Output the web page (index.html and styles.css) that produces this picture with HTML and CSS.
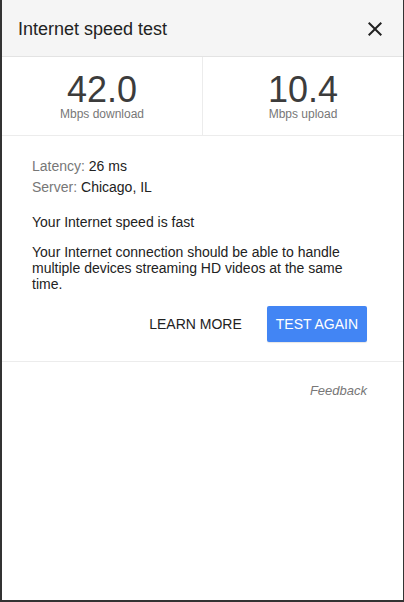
FILE: index.html
```html
<!DOCTYPE html>
<html lang="en">
<head>
	<meta charset="UTF-8">
	<title>Internet speed test</title>
	<link rel="stylesheet" href="styles.css">
</head>
<body>
	<div class="dialog">
		<div class="head">
			<h1 class="title">Internet speed test</h1>
			<a class="close" href="#close">
				<svg width="24" height="24" viewBox="0 0 24 24"><path d="M19 6.41L17.59 5 12 10.59 6.41 5 5 6.41 10.59 12 5 17.59 6.41 19 12 13.41 17.59 19 19 17.59 13.41 12z" fill="#222"/></svg>
			</a>
		</div>
		<div class="stats">
			<div class="stat">
				<div class="num">42.0</div>
				<div class="unit">Mbps download</div>
			</div>
			<div class="stat">
				<div class="num">10.4</div>
				<div class="unit">Mbps upload</div>
			</div>
		</div>
		<div class="info">
			<div class="line"><span class="label">Latency:</span> 26 ms</div>
			<div class="line"><span class="label">Server:</span> Chicago, IL</div>
			<div class="verdict">Your Internet speed is fast</div>
			<p class="desc">Your Internet connection should be able to handle multiple devices streaming HD videos at the same time.</p>
			<div class="actions">
				<a class="btn" href="#more">LEARN MORE</a>
				<a class="btn primary" href="#again">TEST AGAIN</a>
			</div>
		</div>
		<div class="foot">
			<a class="feedback" href="#feedback">Feedback</a>
		</div>
	</div>
</body>
</html>
```
FILE: styles.css
```css
*{
	margin: 0;
	padding: 0;
	box-sizing: border-box;
	text-decoration: none;
}
body{
	font-family: "Liberation Sans", Arial, sans-serif;
	color: #222;
	background: #fff;
}
.dialog{
	width: 404px;
	height: 602px;
	border-left: 2px solid #333;
	border-right: 1px solid #333;
	border-bottom: 2px solid #333;
	background: #fff;
}
.head{
	height: 57px;
	display: flex;
	align-items: center;
	justify-content: space-between;
	padding: 0 16px 0 16px;
	background: #f5f5f5;
	border-bottom: 1px solid #e3e3e3;
}
.title{
	font-size: 18px;
	font-weight: normal;
	line-height: 20px;
	color: #222;
	padding-top: 2px;
}
.close{
	display: flex;
	padding-top: 1px;
}
.stats{
	display: flex;
	height: 79px;
	border-bottom: 1px solid #ececec;
}
.stat{
	flex: 1;
	text-align: center;
	padding-top: 16px;
}
.stat + .stat{
	border-left: 1px solid #ececec;
}
.num{
	font-size: 36px;
	line-height: 34px;
	color: #3c3c3c;
}
.unit{
	font-size: 12px;
	line-height: 14px;
	color: #777;
}
.info{
	padding: 20px 36px 19px 30px;
	font-size: 14px;
	border-bottom: 1px solid #ececec;
}
.line{
	line-height: 21px;
}
.label{
	color: #777;
}
.verdict{
	margin-top: 14px;
	line-height: 20px;
}
.desc{
	margin-top: 12px;
	line-height: 16px;
}
.actions{
	display: flex;
	justify-content: flex-end;
	align-items: center;
	gap: 16px;
	margin-top: 14px;
}
.btn{
	display: block;
	height: 36px;
	line-height: 36px;
	padding: 0 9px;
	color: #222;
	font-size: 14px;
}
.primary{
	background: #4285f4;
	color: #fff;
	border-radius: 2px;
	box-shadow: 0 1px 1px rgba(0,0,0,0.1);
}
.foot{
	text-align: right;
	padding: 19px 36px 0 0;
}
.feedback{
	font-size: 13px;
	line-height: 16px;
	font-style: italic;
	color: #777;
}
```
